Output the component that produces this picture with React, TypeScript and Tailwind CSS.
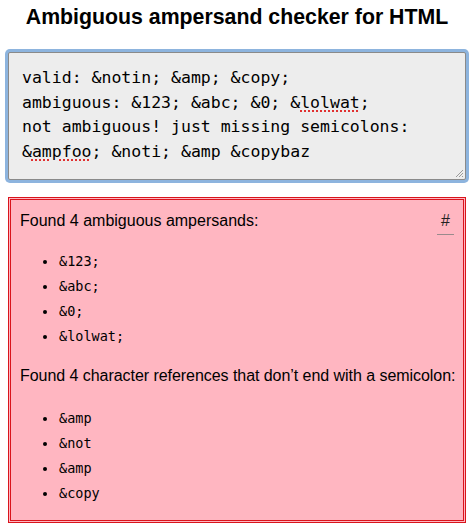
import React from "react";

const sans = { fontFamily: '"Liberation Sans", Arial, sans-serif' };
const mono = { fontFamily: '"DejaVu Sans Mono", monospace' };

const Misspelled = ({ children }: { children: React.ReactNode }) => (
  <span className="underline decoration-dotted decoration-[#e03030] decoration-2 underline-offset-[3px]">
    {children}
  </span>
);

const ambiguous = ["&123;", "&abc;", "&0;", "&lolwat;"];
const unterminated = ["&amp", "&not", "&amp", "&copy"];

const RefList = ({ items, className }: { items: string[]; className: string }) => (
  <ul className={`list-disc pl-[38px] text-[13.5px] leading-[25px] ${className}`} style={mono}>
    {items.map((item, i) => (
      <li key={i} className="pl-[1px]">
        {item}
      </li>
    ))}
  </ul>
);

export default function App() {
  return (
    <div className="min-h-[525px] bg-white px-[8px] pt-[5px] text-black" style={sans}>
      <h1 className="text-center text-[21.3px] leading-[24px] font-bold">
        Ambiguous ampersand checker for HTML
      </h1>

      <div className="relative mt-[23px] rounded-[2px] border border-[#8a8a8a] bg-[#ededed] px-[13px] pt-[13px] pb-[15px] text-[16.5px] leading-[24.5px] shadow-[0_0_0_3px_#8db4de] whitespace-pre" style={mono}>
        <div>valid: &amp;notin; &amp;amp; &amp;copy;</div>
        <div>
          ambiguous: &amp;123; &amp;abc; &amp;0; &amp;<Misspelled>lolwat</Misspelled>;
        </div>
        <div>not ambiguous! just missing semicolons:</div>
        <div>
          &amp;<Misspelled>ampfoo</Misspelled>; &amp;noti; &amp;amp &amp;copybaz
        </div>
        <svg className="absolute right-[1px] bottom-[1px]" width="10" height="10" viewBox="0 0 10 10">
          <path d="M9 2 L2 9 M9 5 L5 9 M9 8 L8 9" stroke="#9a9a9a" strokeWidth="1" />
        </svg>
      </div>

      <div className="mt-[17px] border-[3px] border-double border-[#d9141c] bg-[#ffb6c1] px-[9px] pt-[11px] pb-[4px] text-[16px] leading-[20px]">
        <div className="flex h-[20px] items-start justify-between">
          <p>Found 4 ambiguous ampersands:</p>
          <a className="border-b border-[#9a8a8c] px-[4px] pb-[3px] text-[#222]">#</a>
        </div>
        <RefList items={ambiguous} className="mt-[18px] mb-[17px]" />
        <p className="whitespace-nowrap tracking-[-0.05px]">
          Found 4 character references that don’t end with a semicolon:
        </p>
        <RefList items={unterminated} className="mt-[20px] mb-[10px]" />
      </div>
    </div>
  );
}
